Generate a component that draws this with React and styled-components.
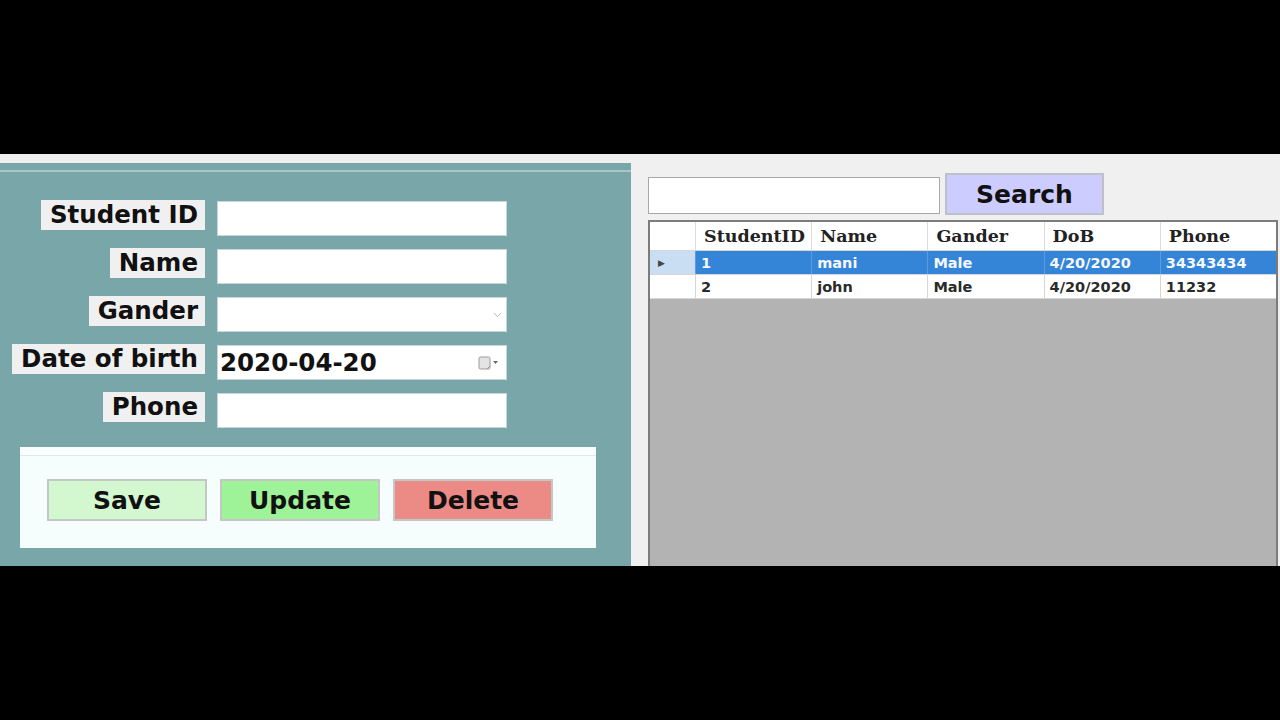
import React from "react";
import styled, { createGlobalStyle } from "styled-components";
import { ChevronDown } from "lucide-react";

const GlobalStyle = createGlobalStyle`
  html, body {
    margin: 0;
    padding: 0;
    background: #000;
  }
  * {
    box-sizing: border-box;
  }
`;

const Screen = styled.div`
  width: 1280px;
  height: 720px;
  padding-top: 154px;
  background: #000;
  overflow: hidden;
`;

const Window = styled.div`
  height: 412px;
  display: grid;
  grid-template-columns: 631px 1fr;
  background: #f0f0f0;
  overflow: hidden;
`;

const FormPanel = styled.div`
  margin-top: 9px;
  background: #79a6a9;
  box-shadow: inset 0 7px 0 #79a6a9, inset 0 9px 0 #a9c7c9;
  padding: 38px 0 0 15px;
  font-family: "DejaVu Sans", Verdana, sans-serif;
`;

const Fields = styled.div`
  display: grid;
  grid-template-columns: 190px 290px;
  column-gap: 12px;
  row-gap: 13px;
  align-items: start;
`;

const Label = styled.div`
  justify-self: end;
  height: 30px;
  margin-top: -1px;
  padding: 0 7px 0 9px;
  background: #f0f0f0;
  color: #111;
  font-weight: bold;
  font-size: 24.5px;
  line-height: 30px;
  white-space: nowrap;
`;

const Field = styled.div`
  position: relative;
  height: 35px;
  background: #fff;
  border: 1px solid #c9d6d7;
  display: flex;
  align-items: center;
  padding: 0 2px;
  font-weight: bold;
  font-size: 24.5px;
  color: #111;
`;

const FieldIcon = styled.span`
  position: absolute;
  right: ${(props) => props.right || 6}px;
  top: 50%;
  transform: translateY(-50%);
  display: flex;
`;

const ButtonPanel = styled.div`
  width: 576px;
  height: 101px;
  margin: 19px 0 0 5px;
  background: #f6fdfd;
  border-top: 8px solid #f9fefe;
  box-shadow: inset 0 1px 0 #dde9ea;
  display: flex;
  gap: 13px;
  padding: 24px 0 0 27px;
`;

const ActionButton = styled.button`
  width: 160px;
  height: 42px;
  background: ${(props) => props.bg};
  border: 2px solid #c4c8c4;
  font-family: "DejaVu Sans", Verdana, sans-serif;
  font-weight: bold;
  font-size: 25px;
  color: #111;
  padding: 0;
`;

const ListPanel = styled.div`
  padding: 19px 2px 0 17px;
  display: flex;
  flex-direction: column;
`;

const SearchBar = styled.div`
  display: flex;
  align-items: flex-start;
  gap: 5px;
`;

const SearchInput = styled.div`
  width: 292px;
  height: 37px;
  margin-top: 4px;
  background: #fff;
  border: 1px solid #a8a8a8;
`;

const SearchButton = styled.button`
  width: 159px;
  height: 42px;
  background: #ccccfe;
  border: 2px solid #c0c0c8;
  font-family: "DejaVu Sans", Verdana, sans-serif;
  font-weight: bold;
  font-size: 25px;
  color: #111;
  padding: 0;
`;

const Grid = styled.div`
  margin-top: 5px;
  flex: 1;
  background: #b3b3b3;
  border: 2px solid #7c7c7c;
  border-bottom: none;
`;

const Row = styled.div`
  display: grid;
  grid-template-columns: 45px repeat(5, 1fr);
  height: ${(props) => (props.header ? 29 : 24)}px;
  background: ${(props) => (props.selected ? "#3484d8" : "#fff")};
  border-bottom: 1px solid #d6d6d6;
`;

const HeadCell = styled.div`
  padding-left: 8px;
  border-left: 1px solid #dcdcdc;
  display: flex;
  align-items: center;
  font-family: "DejaVu Serif", "Liberation Serif", serif;
  font-weight: bold;
  font-size: 17.5px;
  color: #222;
  white-space: nowrap;
  &:first-child {
    border-left: none;
  }
`;

const Cell = styled.div`
  padding-left: 5px;
  border-left: 1px solid ${(props) => (props.selected ? "#5d9ae0" : "#d6d6d6")};
  display: flex;
  align-items: center;
  font-family: "DejaVu Sans", Verdana, sans-serif;
  font-weight: bold;
  font-size: 14.5px;
  color: ${(props) => (props.selected ? "#f4f8ff" : "#2a2a2a")};
`;

const RowHead = styled.div`
  background: ${(props) => (props.selected ? "#c9def3" : "#fff")};
  display: flex;
  align-items: center;
  padding-left: 8px;
  color: #444;
  font-size: 9px;
`;

const fields = [
  { label: "Student ID" },
  { label: "Name" },
  { label: "Gander", kind: "combo" },
  { label: "Date of birth", kind: "date", value: "2020-04-20" },
  { label: "Phone" },
];

const buttons = [
  { text: "Save", bg: "#d3f8d0" },
  { text: "Update", bg: "#9ef297" },
  { text: "Delete", bg: "#ec8a86" },
];

const columns = ["StudentID", "Name", "Gander", "DoB", "Phone"];

const students = [
  ["1", "mani", "Male", "4/20/2020", "34343434"],
  ["2", "john", "Male", "4/20/2020", "11232"],
];

const CalendarIcon = () => (
  <svg width="22" height="14" viewBox="0 0 22 14">
    <rect x="1" y="1" width="11" height="12" rx="1.5" fill="#e4e4e4" stroke="#9a9a9a" />
    <path d="M9 13 L12 10" stroke="#9a9a9a" />
    <path d="M15 5 L20 5 L17.5 8 Z" fill="#666" />
  </svg>
);

const App = () => {
  return (
    <Screen>
      <GlobalStyle />
      <Window>
        <FormPanel>
          <Fields>
            {fields.map((f) => (
              <React.Fragment key={f.label}>
                <Label>{f.label}</Label>
                <Field>
                  {f.value}
                  {f.kind === "combo" && (
                    <FieldIcon right={2}>
                      <ChevronDown size={13} color="#a8a8a8" strokeWidth={1.5} />
                    </FieldIcon>
                  )}
                  {f.kind === "date" && (
                    <FieldIcon right={6}>
                      <CalendarIcon />
                    </FieldIcon>
                  )}
                </Field>
              </React.Fragment>
            ))}
          </Fields>
          <ButtonPanel>
            {buttons.map((b) => (
              <ActionButton key={b.text} bg={b.bg}>
                {b.text}
              </ActionButton>
            ))}
          </ButtonPanel>
        </FormPanel>

        <ListPanel>
          <SearchBar>
            <SearchInput />
            <SearchButton>Search</SearchButton>
          </SearchBar>
          <Grid>
            <Row header>
              <HeadCell />
              {columns.map((c) => (
                <HeadCell key={c}>{c}</HeadCell>
              ))}
            </Row>
            {students.map((s, i) => (
              <Row key={s[0]} selected={i === 0}>
                <RowHead selected={i === 0}>{i === 0 ? "▶" : ""}</RowHead>
                {s.map((v, j) => (
                  <Cell key={j} selected={i === 0}>
                    {v}
                  </Cell>
                ))}
              </Row>
            ))}
          </Grid>
        </ListPanel>
      </Window>
    </Screen>
  );
};

export default App;
